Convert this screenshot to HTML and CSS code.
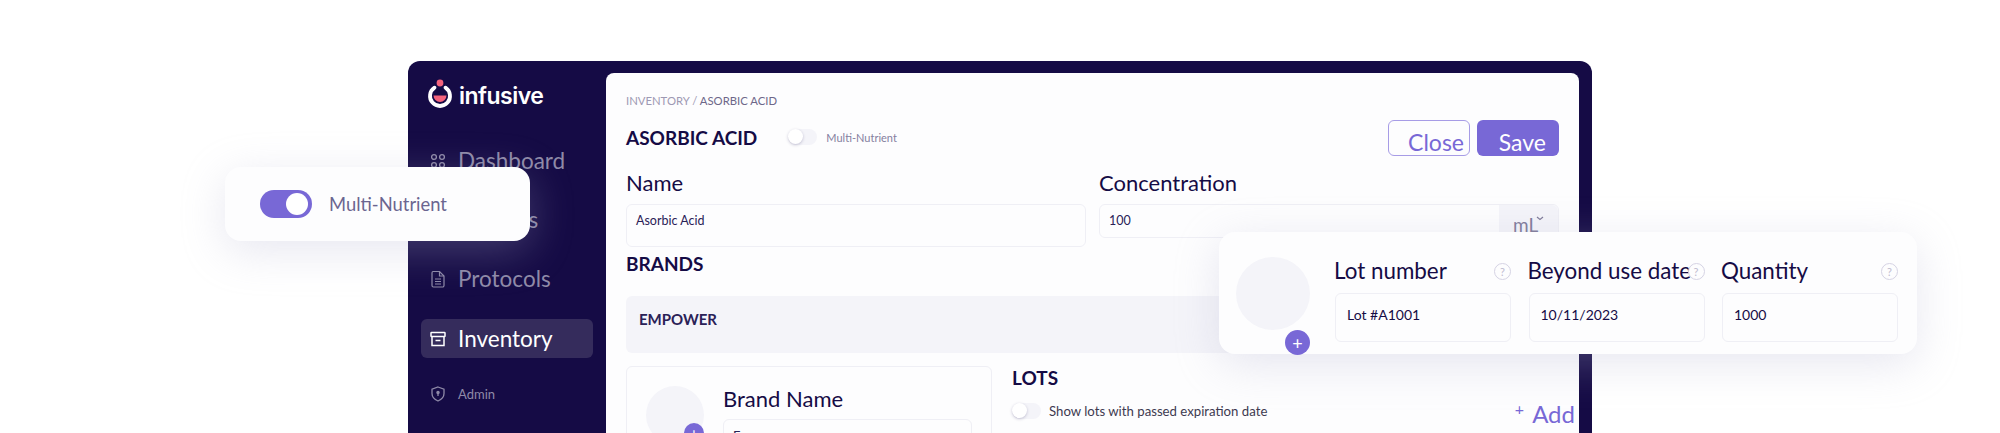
FILE: index.html
```html
<!DOCTYPE html>
<html lang="en">
<head>
<meta charset="utf-8">
<title>Infusive inventory</title>
<link rel="stylesheet" href="styles.css">
</head>
<body>
<div class="stage">
  <div class="app">
    <aside class="sidebar">
      <div class="logo">
        <svg class="logo-mark" width="26" height="34" viewBox="0 0 26 34">
          <circle cx="13" cy="4" r="3.4" fill="#f4637c"/>
          <path d="M7.500 8.650a10 10 0 1 0 11 0" fill="none" stroke="#fff" stroke-width="3.800" stroke-linecap="round"/>
          <path d="M6.500 16.500h13a6.500 6.500 0 0 1-13 0z" fill="#f4637c"/>
        </svg>
        <span class="logo-text">infusive</span>
      </div>
      <nav class="nav">
        <a class="nav-item">
          <svg class="nav-icon" width="16" height="16" viewBox="0 0 16 16" fill="none" stroke="currentColor" stroke-width="1.3"><circle cx="4" cy="4" r="2.400"/><circle cx="12" cy="4" r="2.400"/><circle cx="4" cy="12" r="2.400"/><circle cx="12" cy="12" r="2.400"/></svg>
          <span>Dashboard</span>
        </a>
        <a class="nav-item">
          <svg class="nav-icon" width="16" height="16" viewBox="0 0 16 16" fill="none" stroke="currentColor" stroke-width="1.3"><circle cx="8" cy="5" r="3"/><path d="M2 15c0-3.500 2.500-5 6-5s6 1.500 6 5"/></svg>
          <span>Patients</span>
        </a>
        <a class="nav-item">
          <svg class="nav-icon" width="16" height="18" viewBox="0 0 16 18" fill="none" stroke="currentColor" stroke-width="1.2"><path d="M3 1.500h6.500L14 6v9.500a1.500 1.500 0 0 1-1.500 1.500h-9A1.500 1.500 0 0 1 2 15.500V3A1.500 1.500 0 0 1 3 1.500z"/><path d="M9.500 1.500V6H14M5 9h6M5 11.500h6M5 14h6"/></svg>
          <span>Protocols</span>
        </a>
        <a class="nav-item nav-item-active">
          <svg class="nav-icon" width="16" height="16" viewBox="0 0 16 16" fill="none" stroke="currentColor" stroke-width="1.5"><rect x="1" y="1.500" width="14" height="4" rx=".6"/><path d="M2 5.500V14.500H14V5.500M5.500 9.500h5"/></svg>
          <span>Inventory</span>
        </a>
        <a class="nav-item nav-item-small">
          <svg class="nav-icon" width="16" height="16" viewBox="0 0 16 16" fill="none" stroke="currentColor" stroke-width="1.3"><path d="M8 1l6 2.200v4.300c0 3.500-2.500 6-6 7.500-3.500-1.500-6-4-6-7.500V3.200z"/><circle cx="8" cy="6.500" r="1.100" fill="currentColor"/><path d="M8 7v3"/></svg>
          <span>Admin</span>
        </a>
      </nav>
    </aside>

    <main class="panel">
      <div class="crumbs">INVENTORY / <b>ASORBIC ACID</b></div>
      <header class="title-row">
        <h1 class="heading">ASORBIC ACID</h1>
        <span class="switch"><i class="knob"></i></span>
        <span class="switch-label">Multi-Nutrient</span>
        <div class="actions">
          <button class="btn btn-outline">Close</button>
          <button class="btn btn-solid">Save</button>
        </div>
      </header>
      <div class="form-row">
        <div class="field">
          <label class="label">Name</label>
          <div class="input input-tall">Asorbic Acid</div>
        </div>
        <div class="field">
          <label class="label">Concentration</label>
          <div class="input input-unit">
            <span class="input-value">100</span>
            <span class="unit">mL<svg class="unit-caret" width="8" height="5" viewBox="0 0 8 5" fill="none" stroke="currentColor" stroke-width="1.2"><path d="M1 1l3 2.500L7 1"/></svg></span>
          </div>
        </div>
      </div>
      <h2 class="heading heading-brands">BRANDS</h2>
      <div class="brand-bar">EMPOWER</div>
      <div class="brand-detail">
        <section class="brand-card">
          <div class="avatar avatar-brand"><span class="plus plus-brand">+</span></div>
          <div class="brand-fields">
            <label class="label">Brand Name</label>
            <div class="input input-brand">Empower</div>
          </div>
        </section>
        <section class="lots">
          <h2 class="heading">LOTS</h2>
          <div class="lots-row">
            <span class="switch"><i class="knob"></i></span>
            <span class="lots-text">Show lots with passed expiration date</span>
            <span class="add"><span class="add-plus">+</span>Add</span>
          </div>
        </section>
      </div>
    </main>
  </div>

  <div class="float-card toggle-card">
    <span class="switch-on"><i class="knob-on"></i></span>
    <span class="toggle-text">Multi-Nutrient</span>
  </div>

  <div class="float-card lot-card">
    <div class="avatar avatar-lot"><span class="plus plus-lot">+</span></div>
    <div class="lot-field">
      <div class="lot-head"><span class="label">Lot number</span><span class="help">?</span></div>
      <div class="input input-lot">Lot #A1001</div>
    </div>
    <div class="lot-field">
      <div class="lot-head"><span class="label">Beyond use date</span><span class="help">?</span></div>
      <div class="input input-lot">10/11/2023</div>
    </div>
    <div class="lot-field">
      <div class="lot-head"><span class="label">Quantity</span><span class="help">?</span></div>
      <div class="input input-lot">1000</div>
    </div>
  </div>
</div>
</body>
</html>
```
FILE: styles.css
```css
* { box-sizing: border-box; }
html, body { margin: 0; height: 433px; overflow: hidden; background: #fff; }
body { font-family: "Lato", "Noto Sans", sans-serif; color: #150b45; }
.stage { position: relative; width: 2000px; height: 433px; padding: 61px 0 0 408px; }

.app { display: flex; width: 1184px; height: 372px; background: #150b45; border-radius: 12px 12px 0 0; overflow: hidden; }

.sidebar { width: 198px; padding: 18px 13px 0; flex: none; }
.logo { display: flex; align-items: center; gap: 6px; height: 34px; padding-left: 6px; }
.logo-mark { flex: none; }
.logo-text { color: #fff; font-family: "Inter", sans-serif; font-size: 23px; font-weight: 600; letter-spacing: -0.5px; }

.nav { display: flex; flex-direction: column; gap: 20px; margin-top: 28px; }
.nav-item { display: flex; align-items: center; gap: 12px; height: 39px; padding-left: 9px; border-radius: 6px; color: #8f8aa8; font-size: 22.500px; }
.nav-icon { flex: none; }
.nav-item-active { margin-top: 1px; background: #352c5c; color: #fff; }
.nav-item-small { font-size: 13px; margin-top: -4px; }

.panel { flex: 1; margin: 12px 13px 0 0; padding: 20px 20px 0; background: #fdfdfe; border-radius: 8px 8px 0 0; min-width: 0; }

.crumbs { font-size: 11.300px; line-height: 16px; color: #9d99b3; }
.crumbs b { font-weight: 400; color: #6d6789; }

.title-row { display: flex; align-items: center; height: 36px; margin-top: 11px; }
.heading { margin: 0; font-size: 19px; font-weight: 700; line-height: 24px; color: #150b45; }
.title-row .switch { margin-left: 31px; margin-top: -2px; }
.switch-label { margin-left: 9px; margin-top: -2px; font-size: 11px; color: #8580a0; }
.actions { display: flex; gap: 7px; margin-left: auto; }
.btn { width: 82px; height: 36px; padding: 7px 5px 0 0; text-align: right; border-radius: 6px; font-family: inherit; font-size: 23px; line-height: 28px; }
.btn-outline { background: #fdfdfe; border: 1px solid #a79ce6; color: #7868d6; }
.btn-solid { background: #7868d6; border: 0; color: #fff; padding-right: 13px; }

.switch { display: inline-block; width: 29px; height: 16px; border-radius: 8px; background: #f4f4f9; flex: none; }
.knob { display: block; width: 15px; height: 15px; border-radius: 50%; background: #fff; box-shadow: 0 1px 3px rgba(40, 30, 90, .25); }

.form-row { display: grid; grid-template-columns: 460px 460px; gap: 13px; margin-top: 13px; }
.label { display: block; font-size: 22px; line-height: 28px; color: #150b45; white-space: nowrap; }
.input { margin-top: 7px; border: 1px solid #efeff5; border-radius: 6px; background: #fdfdfe; color: #2a2157; white-space: nowrap; }
.input-tall { height: 43px; padding: 8px 9px; font-size: 12.500px; line-height: 16px; }
.input-unit { display: flex; justify-content: space-between; height: 34px; }
.input-value { padding: 8px 9px; font-size: 12.500px; line-height: 16px; }
.unit { position: relative; width: 59px; padding: 8px 0 0 14px; background: #f4f4f9; color: #7f7b99; font-size: 19px; line-height: 24px; border-radius: 0 6px 6px 0; }
.unit-caret { position: absolute; left: 37px; top: 11px; }

.heading-brands { margin-top: 5px; }
.brand-bar { height: 57px; margin-top: 20px; padding: 14px 13px; border-radius: 6px; background: #f4f4f9; color: #2a2157; font-size: 15px; font-weight: 700; line-height: 18px; }

.brand-detail { display: flex; gap: 20px; margin-top: 13px; }
.brand-card { display: flex; gap: 19px; width: 366px; height: 120px; padding: 19px 19px; border: 1px solid #efeff5; border-radius: 6px; flex: none; }
.avatar { position: relative; border-radius: 50%; background: #f4f4f9; flex: none; }
.avatar-brand { width: 58px; height: 58px; }
.plus { position: absolute; display: flex; align-items: center; justify-content: center; border-radius: 50%; background: #7868d6; color: #fff; font-size: 16px; line-height: 1; }
.plus-brand { right: 0; bottom: 1px; width: 20px; height: 20px; }
.brand-fields { flex: 1; min-width: 0; margin-top: -1px; }
.input-brand { height: 50px; margin-top: 6px; padding: 8px 9px; font-size: 13px; line-height: 16px; width: 249px; }

.lots { flex: 1; position: relative; min-width: 0; }
.lots-row { display: flex; align-items: center; gap: 8px; height: 16px; margin-top: 13px; }
.lots-text { font-size: 13.200px; color: #3d3a50; white-space: nowrap; }
.add { position: absolute; right: -16px; top: 33px; font-size: 24px; line-height: 30px; color: #7868d6; white-space: nowrap; }
.add-plus { position: relative; top: -8px; margin-right: 8px; font-size: 16px; }

.float-card { position: absolute; display: flex; background: #fdfdfe; box-shadow: 0 10px 44px rgba(176, 174, 206, .3); }

.toggle-card { left: 225px; top: 167px; width: 305px; height: 74px; align-items: center; gap: 17px; padding-left: 35px; border-radius: 16px; }
.switch-on { display: block; width: 52px; height: 28px; padding: 3px; border-radius: 14px; background: #7868d6; flex: none; }
.knob-on { display: block; width: 22px; height: 22px; margin-left: 23px; border-radius: 50%; background: #fff; }
.toggle-text { font-size: 18.400px; color: #6b6590; }

.lot-card { left: 1219px; top: 232px; width: 698px; height: 122px; padding: 25px 19px 0 17px; gap: 17.500px; border-radius: 16px; }
.avatar-lot { width: 74px; height: 73px; margin-right: 7.500px; }
.plus-lot { right: 0; bottom: -25px; width: 25px; height: 25px; font-size: 18px; }
.lot-field { width: 176px; flex: none; }
.lot-head { display: flex; justify-content: space-between; align-items: center; height: 28px; }
.lot-head .label { flex: 1; min-width: 0; font-size: 22.400px; margin-left: -1px; }
.help { display: flex; align-items: center; justify-content: center; width: 17px; height: 17px; border: 1.500px solid #d5d3e4; border-radius: 50%; background: #fdfdfe; color: #bdbbd0; font-size: 11px; line-height: 1; flex: none; }
.input-lot { height: 49px; margin-top: 8px; padding: 13px 11px; font-size: 14px; line-height: 16px; color: #150b45; }
```
